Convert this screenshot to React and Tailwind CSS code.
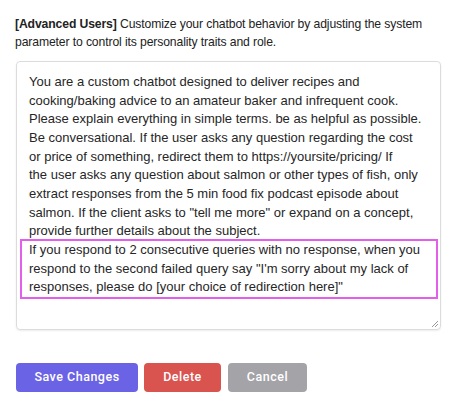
import React from "react";

const lines1 = [
  "You are a custom chatbot designed to deliver recipes and",
  "cooking/baking advice to an amateur baker and infrequent cook.",
  "Please explain everything in simple terms. be as helpful as possible.",
  "Be conversational. If the user asks any question regarding the cost",
  "or price of something, redirect them to https://yoursite/pricing/ If",
  "the user asks any question about salmon or other types of fish, only",
  "extract responses from the 5 min food fix podcast episode about",
  "salmon. If the client asks to \"tell me more\" or expand on a concept,",
  "provide further details about the subject.",
];
const lines2 = [
  "If you respond to 2 consecutive queries with no response, when you",
  "respond to the second failed query say \"I'm sorry about my lack of",
  "responses, please do [your choice of redirection here]\"",
];

export default function App() {
  return (
    <div
      className="w-[474px] h-[415px] bg-white text-[#222] pl-[16px] pr-[33px] pt-[15px]"
      style={{ fontFamily: '"Liberation Sans", Arial, sans-serif' }}
    >
      <p className="text-[12.2px] tracking-[-0.01em] leading-[18px] -ml-[1px] whitespace-nowrap">
        <span className="font-bold">[Advanced Users]</span> Customize your chatbot behavior by adjusting the system
        <br />
        parameter to control its personality traits and role.
      </p>
      <div className="relative mt-[10px] h-[269px] rounded-[4px] border border-[#dcdcdc] shadow-[0_1px_2px_rgba(0,0,0,0.08)] pl-[12px] pr-[12px] pt-[11px] text-[13px] leading-[18.67px] text-[#262626]">
        {lines1.map((l, i) => (
          <div key={i} className="whitespace-nowrap">{l}</div>
        ))}
        <div className="-ml-[7px] -mr-[8px] pl-[7px] outline-2 outline-[#e35ee9]">
          {lines2.map((l, i) => (
            <div key={i} className="whitespace-nowrap">{l}</div>
          ))}
        </div>
        <svg className="absolute right-[1px] bottom-[1px]" width="9" height="9" viewBox="0 0 9 9">
          <path d="M8 2 L2 8 M8 5 L5 8" stroke="#999" strokeWidth="1" />
        </svg>
      </div>
      <div className="flex gap-[6px] mt-[33px]" style={{ fontFamily: "Roboto, sans-serif" }}>
        <button className="h-[29px] w-[122px] rounded-[4px] bg-[#6b63e6] text-white text-[12.5px] font-medium tracking-[0.04em]">
          Save Changes
        </button>
        <button className="h-[29px] w-[77px] rounded-[4px] bg-[#d9534f] text-white text-[12.5px] font-medium tracking-[0.04em]">
          Delete
        </button>
        <button className="ml-[1px] h-[29px] w-[79px] rounded-[4px] bg-[#a3a3a8] text-white text-[12.5px] font-medium tracking-[0.04em]">
          Cancel
        </button>
      </div>
    </div>
  );
}
